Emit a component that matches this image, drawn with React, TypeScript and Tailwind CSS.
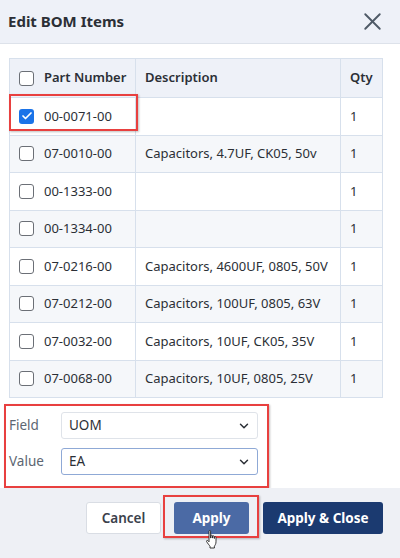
import { X, ChevronDown, Check } from "lucide-react";

type Row = {
  part: string;
  description: string;
  qty: number;
  checked?: boolean;
};

const rows: Row[] = [
  { part: "00-0071-00", description: "", qty: 1, checked: true },
  { part: "07-0010-00", description: "Capacitors, 4.7UF, CK05, 50v", qty: 1 },
  { part: "00-1333-00", description: "", qty: 1 },
  { part: "00-1334-00", description: "", qty: 1 },
  { part: "07-0216-00", description: "Capacitors, 4600UF, 0805, 50V", qty: 1 },
  { part: "07-0212-00", description: "Capacitors, 100UF, 0805, 63V", qty: 1 },
  { part: "07-0032-00", description: "Capacitors, 10UF, CK05, 35V", qty: 1 },
  { part: "07-0068-00", description: "Capacitors, 10UF, 0805, 25V", qty: 1 },
];

function Box({ checked }: { checked?: boolean }) {
  if (checked) {
    return (
      <span className="flex h-[15px] w-[15px] shrink-0 items-center justify-center rounded-[3px] bg-[#1a73e8]">
        <Check size={12} strokeWidth={3.5} className="text-white" />
      </span>
    );
  }
  return (
    <span className="h-[15px] w-[15px] shrink-0 rounded-[3px] border border-[#6b6f76] bg-white" />
  );
}

function HandCursor() {
  return (
    <svg
      width="18"
      height="20"
      viewBox="0 0 18 20"
      className="pointer-events-none absolute left-[204px] top-[529px]"
    >
      <path
        d="M5 2.2c0-.9 1.6-.9 1.6 0V9h.3V6.8c0-.9 1.5-.9 1.5 0V9h.3V7.5c0-.9 1.5-.9 1.5 0V9.4h.3V8.4c0-.9 1.5-.9 1.5 0v4.4c0 2.2-1 3.4-1.6 4.4V19H6v-1.8c-.8-1-2.3-2.8-3.4-4.6-.5-.9.6-1.6 1.3-.9L5 12.8V2.2z"
        fill="#fff"
        stroke="#222"
        strokeWidth="0.9"
        strokeLinejoin="round"
      />
    </svg>
  );
}

export default function App() {
  return (
    <div className="relative h-[558px] w-[400px] overflow-hidden bg-white font-['Noto_Sans','Open_Sans',sans-serif] text-[#2b2f36]">
      {/* Header */}
      <div className="flex h-[44px] items-center justify-between border-b border-[#dde2ea] bg-[#eef1f8] pl-[8px] pr-[13px]">
        <h2 className="text-[15px] font-bold text-[#2b2f36]">Edit BOM Items</h2>
        <X size={29} strokeWidth={1.6} className="text-[#4f5a67]" />
      </div>

      {/* Table */}
      <div className="px-[9px] pt-[14px]">
        <table className="w-[374px] table-fixed border-collapse text-[13px]">
          <colgroup>
            <col className="w-[126px]" />
            <col className="w-[205px]" />
            <col />
          </colgroup>
          <thead>
            <tr className="h-[39px] bg-[#eef1f8]">
              <th className="border border-[#d7e0ec] pl-[9px] text-left font-semibold">
                <div className="flex items-center gap-[10px]">
                  <Box />
                  <span>Part Number</span>
                </div>
              </th>
              <th className="border border-[#d7e0ec] pl-[9px] text-left font-semibold">
                Description
              </th>
              <th className="border border-[#d7e0ec] pl-[9px] text-left font-semibold">
                Qty
              </th>
            </tr>
          </thead>
          <tbody>
            {rows.map((row, i) => (
              <tr
                key={row.part}
                className={`h-[37.5px] ${i % 2 === 1 ? "bg-[#f5f7fa]" : "bg-white"}`}
              >
                <td className="relative border border-[#d7e0ec] pl-[9px]">
                  <div className="flex items-center gap-[10px]">
                    <Box checked={row.checked} />
                    <span>{row.part}</span>
                  </div>
                  {row.checked && (
                    <span className="absolute left-[-1px] top-[-4px] h-[37px] w-[129px] border-[2.5px] border-[#e8403f] shadow-[1px_1px_2px_rgba(0,0,0,0.25)]" />
                  )}
                </td>
                <td className="whitespace-nowrap border border-[#d7e0ec] pl-[9px]">
                  {row.description}
                </td>
                <td className="border border-[#d7e0ec] pl-[9px]">{row.qty}</td>
              </tr>
            ))}
          </tbody>
        </table>
      </div>

      {/* Field / Value */}
      <div className="ml-[4px] mt-[6px] w-[265px] border-[2.5px] border-[#e8403f] px-[3px] pb-[11px] pt-[6px] shadow-[1px_1px_2px_rgba(0,0,0,0.25)]">
        <div className="flex flex-col gap-[9px]">
          <div className="flex items-center">
            <span className="w-[52px] text-[13.5px] text-[#5d6672]">Field</span>
            <div className="flex h-[27px] w-[197px] items-center justify-between rounded-[3px] border border-[#dfe3e9] bg-white pl-[7px] pr-[6px] text-[13.5px]">
              <span>UOM</span>
              <ChevronDown size={14} strokeWidth={2.5} className="text-[#2b2f36]" />
            </div>
          </div>
          <div className="flex items-center">
            <span className="w-[52px] text-[13.5px] text-[#5d6672]">Value</span>
            <div className="flex h-[27px] w-[197px] items-center justify-between rounded-[3px] border border-[#8fa9d6] bg-white pl-[7px] pr-[6px] text-[13.5px]">
              <span>EA</span>
              <ChevronDown size={14} strokeWidth={2.5} className="text-[#2b2f36]" />
            </div>
          </div>
        </div>
      </div>

      {/* Footer */}
      <div className="absolute bottom-0 left-0 right-0 flex h-[70px] items-start justify-end gap-[13px] bg-[#eef0f5] pr-[17px] pt-[14px]">
        <button className="h-[32px] w-[75px] rounded-[3px] border border-[#d9dde4] bg-white text-[13.5px] font-semibold text-[#3a414b]">
          Cancel
        </button>
        <div className="relative">
          <button className="h-[32px] w-[75px] rounded-[3px] bg-[#4b6aa5] text-[13.5px] font-bold text-white">
            Apply
          </button>
          <span className="pointer-events-none absolute -bottom-[4px] -left-[11px] -right-[10px] -top-[7px] border-[2.5px] border-[#e8403f] shadow-[1px_1px_2px_rgba(0,0,0,0.25)]" />
        </div>
        <button className="ml-[1px] h-[32px] w-[120px] rounded-[3px] bg-[#1b3a70] text-[13.5px] font-bold text-white">
          Apply &amp; Close
        </button>
      </div>

      <HandCursor />
    </div>
  );
}
